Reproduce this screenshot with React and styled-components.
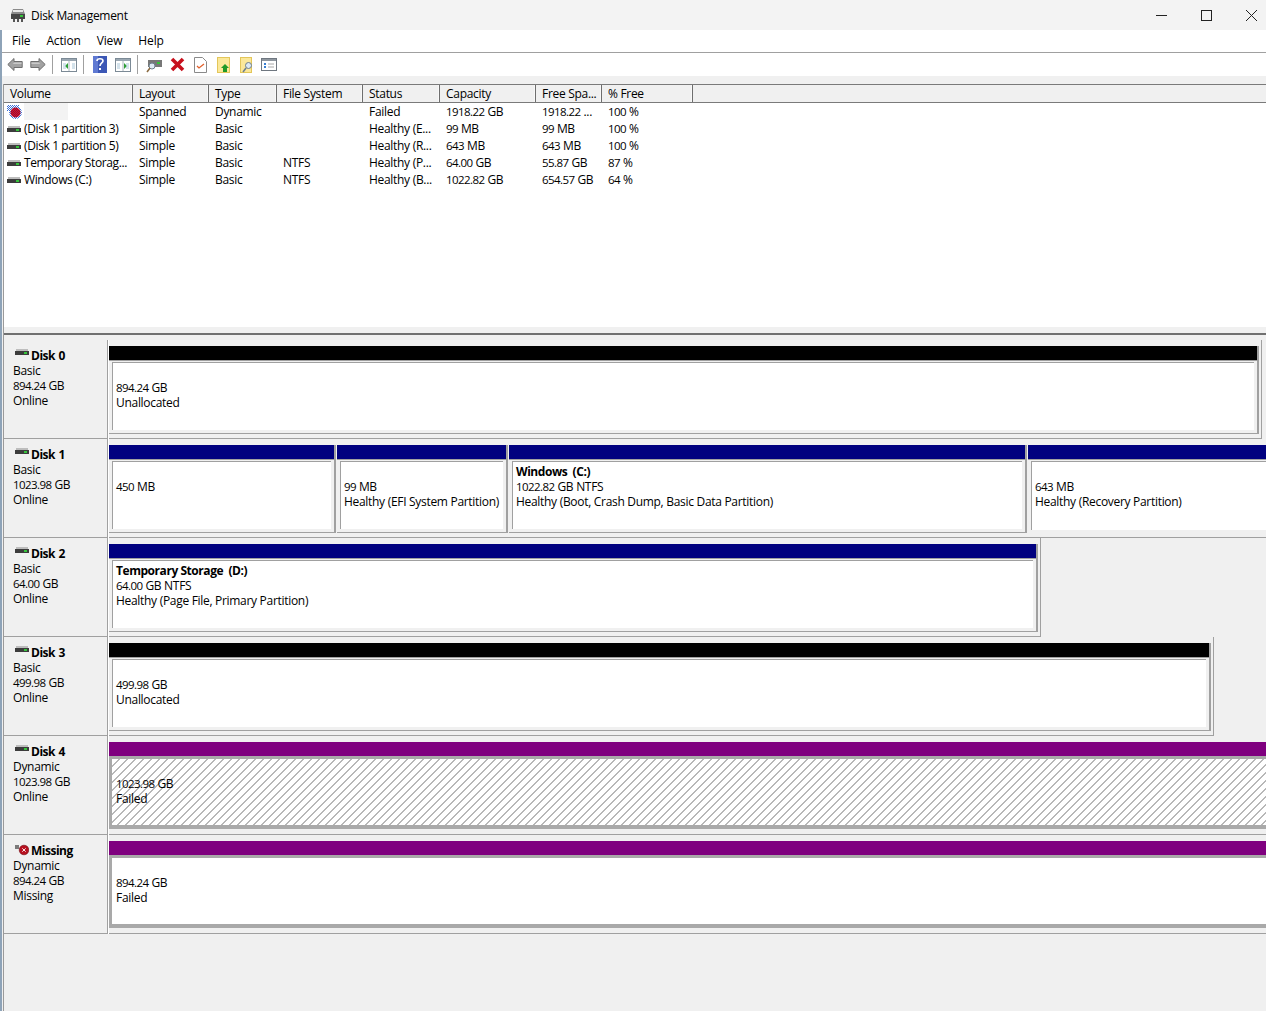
import React from 'react';
import styled, { createGlobalStyle } from 'styled-components';

const GlobalStyle = createGlobalStyle`
  html, body { margin: 0; padding: 0; background: #f0f0f0; overflow: hidden; }
  #root { width: 1266px; height: 1011px; }
`;

const Window = styled.div`
  width: 1266px;
  height: 1011px;
  display: flex;
  flex-direction: column;
  overflow: hidden;
  background: #f0f0f0;
  color: #000;
  font-family: "Open Sans", "Noto Sans", sans-serif;
  font-size: 12px;
  letter-spacing: -0.3px;
`;

const TitleBar = styled.div`
  height: 30px;
  flex: none;
  display: flex;
  align-items: center;
  padding: 0 9px 0 10px;
  gap: 5px;
  background: #f3f3f3;
`;

const TitleText = styled.span`
  flex: 1;
`;

const WinButtons = styled.div`
  display: flex;
  gap: 34px;
  align-items: center;
`;

const Frame = styled.div`
  flex: 1;
  display: flex;
  flex-direction: column;
  min-height: 0;
  border-left: 2px solid #8ea3b8;
`;

const MenuBar = styled.div`
  height: 23px;
  flex: none;
  box-sizing: border-box;
  display: flex;
  align-items: center;
  padding: 0 0 1px 10px;
  gap: 16px;
  background: #fff;
  border-bottom: 1px solid #a0a0a0;
  letter-spacing: -0.15px;
`;

const MenuItem = styled.span``;

const ToolBar = styled.div`
  height: 23px;
  flex: none;
  display: flex;
  align-items: center;
  padding-left: 5px;
  background: #fff;
`;

const ToolIcon = styled.svg`
  flex: none;
  margin-right: ${(p) => p.$gap ?? 6}px;
  transform: ${(p) => (p.$flip ? 'scaleX(-1)' : 'none')};
`;

const ToolSep = styled.div`
  width: 1px;
  height: 19px;
  background: #a0a0a0;
  margin-right: ${(p) => p.$gap ?? 8}px;
  flex: none;
`;

const Main = styled.div`
  flex: 1;
  display: flex;
  flex-direction: column;
  margin: 8px 0 0 1px;
  border-left: 1px solid #9a9a9a;
  min-height: 0;
  overflow: hidden;
`;

const VolumeList = styled.div`
  height: 243px;
  flex: none;
  background: #fff;
`;

const HeaderRow = styled.div`
  display: flex;
  background: #f0f0f0;
  border-top: 1px solid #7a7a7a;
  border-bottom: 1px solid #7a7a7a;
  box-sizing: border-box;
  height: 19px;
`;

const HeaderCell = styled.div`
  width: ${(p) => p.$w}px;
  flex: none;
  box-sizing: border-box;
  padding: 1px 0 0 6px;
  line-height: 16px;
  border-right: 1px solid #6e6e6e;
  box-shadow: inset -1px 0 0 #f8f8f8;
  white-space: nowrap;
`;

const TableRow = styled.div`
  height: 17px;
  display: flex;
  line-height: 17px;
`;

const TableCell = styled.div`
  width: ${(p) => p.$w}px;
  flex: none;
  box-sizing: border-box;
  padding-left: 6px;
  white-space: nowrap;
  overflow: hidden;
`;

const VolumeCell = styled(TableCell)`
  display: flex;
  align-items: center;
  gap: 3px;
  padding-left: 3px;
  letter-spacing: -0.38px;
`;

const BlankName = styled.div`
  width: 44px;
  height: 17px;
  margin-left: -1px;
  background: #f3f3f3;
`;

const Splitter = styled.div`
  height: 8px;
  flex: none;
  border-bottom: 2px solid #707070;
  box-sizing: border-box;
  background: #f0f0f0;
`;

const DiskPane = styled.div`
  padding-top: 5px;
  display: flex;
  flex-direction: column;
  width: 1400px;
`;

const DiskRow = styled.div`
  height: 99px;
  display: flex;
  box-sizing: border-box;
`;

const DiskLabel = styled.div`
  width: 104px;
  height: 99px;
  flex: none;
  box-sizing: border-box;
  padding: 8px 0 0 9px;
  line-height: 15px;
  border-right: 1px solid #a0a0a0;
  border-bottom: 1px solid #a0a0a0;
  box-shadow: 1px 0 0 #fff;
`;

const DiskName = styled.div`
  display: flex;
  align-items: flex-start;
  gap: 2px;
  font-weight: 700;
  margin-left: 2px;
  letter-spacing: -0.5px;
  word-spacing: 1px;
`;

const VolumeStrip = styled.div`
  display: flex;
  box-sizing: border-box;
  height: 99px;
  padding: 6px ${(p) => (p.$framed ? 1 : 0)}px 0 0;
  margin-left: 1px;
  border-bottom: 1px solid #a0a0a0;
  border-right: ${(p) => (p.$framed ? '1px solid #a0a0a0' : '0')};
  flex: ${(p) => (p.$framed ? 'none' : 1)};
`;

const Volume = styled.div`
  width: ${(p) => p.$w}px;
  flex: none;
  box-sizing: border-box;
  display: flex;
  flex-direction: column;
  height: ${(p) => (p.$selected ? 87 : 88)}px;
  margin-right: 1px;
  border-right: ${(p) => (p.$open ? '0' : '2px solid #a0a0a0')};
  border-bottom: ${(p) => (p.$open || p.$selected ? '0' : '1px solid #a0a0a0')};
`;

const VolumeBar = styled.div`
  height: 14px;
  flex: none;
  background: ${(p) => p.$color};
  box-shadow: ${(p) => (p.$selected ? 'none' : '0 1px 0 #a0a0a0')};
`;

const VolumeBody = styled.div`
  flex: 1;
  margin: ${(p) => (p.$selected ? '0' : '2px 3px 3px 3px')};
  box-sizing: border-box;
  border-style: solid;
  border-color: ${(p) => (p.$selected ? '#a9a9a9' : '#a0a0a0')};
  border-width: ${(p) => (p.$selected ? '3px 0 4px 3px' : '1px 0 0 1px')};
  padding: ${(p) => (p.$selected ? '17px 0 0 4px' : '2px 0 0 3px')};
  line-height: 15px;
  background: ${(p) =>
    p.$hatched
      ? 'repeating-linear-gradient(135deg, #fff 0 4.9px, #b8b8b8 4.9px 5.657px)'
      : '#fff'};
  white-space: nowrap;
`;

const BodyTitle = styled.div`
  font-weight: 700;
  min-height: 15px;
  white-space: pre;
  letter-spacing: -0.45px;
`;

const Digits = styled.span`
  font-size: 11.5px;
  letter-spacing: -0.55px;
`;

const DiskGlyph = styled.svg`
  flex: none;
  margin-top: ${(p) => p.$top ?? 1}px;
`;

const NumText = ({ children }) => {
  const match = /^[\d.]+/.exec(children || '');
  if (!match) return children || null;
  return (
    <>
      <Digits>{match[0]}</Digits>
      {children.slice(match[0].length)}
    </>
  );
};

const DiskIcon = ({ top }) => (
  <DiskGlyph width="14" height="7" viewBox="0 0 14 7" $top={top}>
    <rect x="1" y="0" width="12" height="2" fill="#bdbdbd" />
    <rect x="0" y="2" width="14" height="4" fill="#3c3c3c" />
    <rect x="9" y="3" width="3" height="2" fill="#35c43b" />
  </DiskGlyph>
);

const FailedIcon = () => (
  <DiskGlyph width="14" height="12" viewBox="0 0 14 12">
    <rect x="0" y="1" width="4" height="4" fill="#7a7a7a" />
    <circle cx="9" cy="6" r="4.8" fill="#b8101f" stroke="#6e0a12" strokeWidth="0.6" />
    <path d="M7.3 4.3l3.4 3.4M10.7 4.3l-3.4 3.4" stroke="#fff" strokeWidth="0.9" />
  </DiskGlyph>
);

const ErrorVolumeIcon = () => (
  <svg width="15" height="15" viewBox="0 0 15 15">
    <defs>
      <pattern id="blueCheck" width="2" height="2" patternUnits="userSpaceOnUse">
        <rect width="2" height="2" fill="#fff" />
        <rect width="1" height="1" fill="#3a6fd8" />
        <rect x="1" y="1" width="1" height="1" fill="#3a6fd8" />
      </pattern>
      <pattern id="redCheck" width="2" height="2" patternUnits="userSpaceOnUse">
        <rect width="2" height="2" fill="#8a1040" />
        <rect width="1" height="1" fill="#e01020" />
        <rect x="1" y="1" width="1" height="1" fill="#e01020" />
      </pattern>
    </defs>
    <rect x="0" y="1" width="12" height="6" fill="url(#blueCheck)" />
    <circle cx="8.5" cy="8.5" r="6.4" fill="url(#blueCheck)" />
    <circle cx="8.5" cy="8.5" r="5" fill="url(#redCheck)" />
  </svg>
);

const columns = [
  { name: 'Volume', w: 129 },
  { name: 'Layout', w: 76 },
  { name: 'Type', w: 68 },
  { name: 'File System', w: 86 },
  { name: 'Status', w: 77 },
  { name: 'Capacity', w: 96 },
  { name: 'Free Spa...', w: 66 },
  { name: '% Free', w: 91 },
];

const rows = [
  { volume: '', layout: 'Spanned', type: 'Dynamic', fs: '', status: 'Failed', cap: '1918.22 GB', free: '1918.22 ...', pct: '100 %', failed: true },
  { volume: '(Disk 1 partition 3)', layout: 'Simple', type: 'Basic', fs: '', status: 'Healthy (E...', cap: '99 MB', free: '99 MB', pct: '100 %' },
  { volume: '(Disk 1 partition 5)', layout: 'Simple', type: 'Basic', fs: '', status: 'Healthy (R...', cap: '643 MB', free: '643 MB', pct: '100 %' },
  { volume: 'Temporary Storag...', layout: 'Simple', type: 'Basic', fs: 'NTFS', status: 'Healthy (P...', cap: '64.00 GB', free: '55.87 GB', pct: '87 %' },
  { volume: 'Windows (C:)', layout: 'Simple', type: 'Basic', fs: 'NTFS', status: 'Healthy (B...', cap: '1022.82 GB', free: '654.57 GB', pct: '64 %' },
];

const disks = [
  { name: 'Disk 0', kind: 'Basic', size: '894.24 GB', state: 'Online', framed: true, volumes: [
    { w: 1150, color: '#000', lines: ['894.24 GB', 'Unallocated'] },
  ] },
  { name: 'Disk 1', kind: 'Basic', size: '1023.98 GB', state: 'Online', volumes: [
    { w: 227, color: '#00007f', lines: ['450 MB'] },
    { w: 171, color: '#00007f', lines: ['99 MB', 'Healthy (EFI System Partition)'] },
    { w: 518, color: '#00007f', title: 'Windows  (C:)', lines: ['1022.82 GB NTFS', 'Healthy (Boot, Crash Dump, Basic Data Partition)'] },
    { w: 300, color: '#00007f', open: true, lines: ['643 MB', 'Healthy (Recovery Partition)'] },
  ] },
  { name: 'Disk 2', kind: 'Basic', size: '64.00 GB', state: 'Online', framed: true, volumes: [
    { w: 929, color: '#00007f', title: 'Temporary Storage  (D:)', lines: ['64.00 GB NTFS', 'Healthy (Page File, Primary Partition)'] },
  ] },
  { name: 'Disk 3', kind: 'Basic', size: '499.98 GB', state: 'Online', framed: true, volumes: [
    { w: 1102, color: '#000', lines: ['499.98 GB', 'Unallocated'] },
  ] },
  { name: 'Disk 4', kind: 'Dynamic', size: '1023.98 GB', state: 'Online', volumes: [
    { w: 1250, color: '#7f007f', open: true, selected: true, hatched: true, lines: ['1023.98 GB', 'Failed'] },
  ] },
  { name: 'Missing', kind: 'Dynamic', size: '894.24 GB', state: 'Missing', failed: true, volumes: [
    { w: 1250, color: '#7f007f', open: true, selected: true, lines: ['894.24 GB', 'Failed'] },
  ] },
];

const Arrow = ({ flip }) => (
  <ToolIcon width="16" height="15" viewBox="0 0 16 15" $gap={flip ? 6 : 7} $flip={flip}>
    <path d="M.8 7.5L7 1.5v3h8.2v6H7v3z" fill="#a2a2a2" stroke="#6f6f6f" />
    <path d="M7.5 5.5h7v1.5h-9z" fill="#c8c8c8" />
  </ToolIcon>
);

const Pane = ({ arrow }) => (
  <ToolIcon width="16" height="14" viewBox="0 0 16 14" $gap={6}>
    <rect x="0.5" y="0.5" width="15" height="13" fill="#fff" stroke="#7c8a96" />
    <rect x="1" y="1" width="14" height="2" fill="#9aa7b2" />
    <path d="M8 3v10" stroke="#aab4bc" />
    <path d={arrow} fill="#2d9e36" />
    <path d="M2 6h3M2 8h3M2 10h3M11 6h3M11 8h3M11 10h3" stroke="#a9c6d8" />
  </ToolIcon>
);

const App = () => (
  <Window>
    <GlobalStyle />
    <TitleBar>
      <svg width="16" height="15" viewBox="0 0 16 15">
        <path d="M3 1h10l2 5H1z" fill="#8a8a8a" />
        <rect x="3" y="2" width="10" height="2" fill="#e8e8e8" />
        <rect x="1" y="6" width="14" height="5" fill="#454545" />
        <rect x="10" y="7" width="3" height="2" fill="#35c43b" />
        <rect x="3" y="11" width="2" height="3" fill="#555" />
        <rect x="7" y="11" width="2" height="3" fill="#555" />
        <rect x="11" y="11" width="2" height="3" fill="#555" />
      </svg>
      <TitleText>Disk Management</TitleText>
      <WinButtons>
        <svg width="11" height="11" viewBox="0 0 11 11"><path d="M0 5.5h11" stroke="#222" /></svg>
        <svg width="11" height="11" viewBox="0 0 11 11"><rect x="0.5" y="0.5" width="10" height="10" fill="none" stroke="#222" /></svg>
        <svg width="11" height="11" viewBox="0 0 11 11"><path d="M0 0l11 11M11 0L0 11" stroke="#222" /></svg>
      </WinButtons>
    </TitleBar>
    <Frame>
      <MenuBar>
        <MenuItem>File</MenuItem>
        <MenuItem>Action</MenuItem>
        <MenuItem>View</MenuItem>
        <MenuItem>Help</MenuItem>
      </MenuBar>
      <ToolBar>
        <Arrow />
        <Arrow flip />
        <ToolSep />
        <Pane arrow="M7 5v6L4 8z" />
        <ToolSep $gap={9} />
        <ToolIcon width="14" height="17" viewBox="0 0 14 17" $gap={8}>
          <rect width="14" height="17" fill="#3c57b5" />
          <rect x="0" y="0" width="5" height="17" fill="#5f79d2" />
          <path d="M4 5c0-3 6-3 6 0 0 2-3 2-3 5" stroke="#fff" strokeWidth="1.6" fill="none" />
          <rect x="6" y="12" width="2" height="2" fill="#fff" />
        </ToolIcon>
        <Pane arrow="M9 5l3 3-3 3z" />
        <ToolSep />
        <ToolIcon width="16" height="16" viewBox="0 0 16 16" $gap={8}>
          <rect x="2" y="3" width="14" height="7" fill="#777" />
          <rect x="11" y="5" width="3" height="2" fill="#35c43b" />
          <circle cx="6" cy="9" r="3" fill="#dfeaf3" stroke="#6d7f8d" />
          <path d="M4 11l-3 4" stroke="#8a6a40" strokeWidth="1.6" />
        </ToolIcon>
        <ToolIcon width="15" height="15" viewBox="0 0 15 15" $gap={9}>
          <path d="M2 2l11 11M13 2L2 13" stroke="#c8101c" strokeWidth="3.6" />
        </ToolIcon>
        <ToolIcon width="13" height="16" viewBox="0 0 13 16" $gap={10}>
          <path d="M.5.5h8l4 4v11H.5z" fill="#fff" stroke="#8a8a8a" />
          <path d="M3 9l2 2 5-4" stroke="#e2602b" strokeWidth="1.3" fill="none" />
        </ToolIcon>
        <ToolIcon width="13" height="16" viewBox="0 0 13 16" $gap={10}>
          <rect x="0.5" y="0.5" width="12" height="15" fill="#fbe89a" stroke="#e3c65a" />
          <path d="M8 7l4 4h-2v4H6v-4H4z" fill="#1f9a28" />
        </ToolIcon>
        <ToolIcon width="13" height="16" viewBox="0 0 13 16" $gap={8}>
          <rect x="0.5" y="0.5" width="11" height="15" fill="#fbe89a" stroke="#e3c65a" />
          <circle cx="8.5" cy="8.5" r="3" fill="#dce9f4" stroke="#6d7f8d" />
          <path d="M6 11l-3 4" stroke="#6d7f8d" strokeWidth="1.6" />
        </ToolIcon>
        <ToolIcon width="16" height="13" viewBox="0 0 16 13">
          <rect x="0.5" y="0.5" width="15" height="12" fill="#fff" stroke="#6f7780" />
          <rect x="1" y="1" width="14" height="2" fill="#8f979f" />
          <path d="M3 5h2v2H3zM3 8h2v2H3z" fill="#3a7fd0" />
          <path d="M7 6h6M7 9h6" stroke="#a8a8a8" />
        </ToolIcon>
      </ToolBar>
      <Main>
        <VolumeList>
          <HeaderRow>
            {columns.map((c) => (
              <HeaderCell key={c.name} $w={c.w}>{c.name}</HeaderCell>
            ))}
          </HeaderRow>
          {rows.map((r, i) => (
            <TableRow key={i}>
              <VolumeCell $w={129}>
                {r.failed ? <ErrorVolumeIcon /> : <DiskIcon top={2} />}
                {r.failed ? <BlankName /> : r.volume}
              </VolumeCell>
              <TableCell $w={76}>{r.layout}</TableCell>
              <TableCell $w={68}>{r.type}</TableCell>
              <TableCell $w={86}>{r.fs}</TableCell>
              <TableCell $w={77}>{r.status}</TableCell>
              <TableCell $w={96}><NumText>{r.cap}</NumText></TableCell>
              <TableCell $w={66}><NumText>{r.free}</NumText></TableCell>
              <TableCell $w={91}><NumText>{r.pct}</NumText></TableCell>
            </TableRow>
          ))}
        </VolumeList>
        <Splitter />
        <DiskPane>
          {disks.map((d) => (
            <DiskRow key={d.name}>
              <DiskLabel>
                <DiskName>
                  {d.failed ? <FailedIcon /> : <DiskIcon />}
                  {d.name}
                </DiskName>
                <div>{d.kind}</div>
                <div><NumText>{d.size}</NumText></div>
                <div>{d.state}</div>
              </DiskLabel>
              <VolumeStrip $framed={d.framed}>
                {d.volumes.map((v, i) => (
                  <Volume key={i} $w={v.w} $open={v.open} $selected={v.selected}>
                    <VolumeBar $color={v.color} $selected={v.selected} />
                    <VolumeBody $selected={v.selected} $hatched={v.hatched}>
                      {!v.selected && <BodyTitle>{v.title}</BodyTitle>}
                      {v.lines.map((l) => (
                        <div key={l}><NumText>{l}</NumText></div>
                      ))}
                    </VolumeBody>
                  </Volume>
                ))}
              </VolumeStrip>
            </DiskRow>
          ))}
        </DiskPane>
      </Main>
    </Frame>
  </Window>
);

export default App;
